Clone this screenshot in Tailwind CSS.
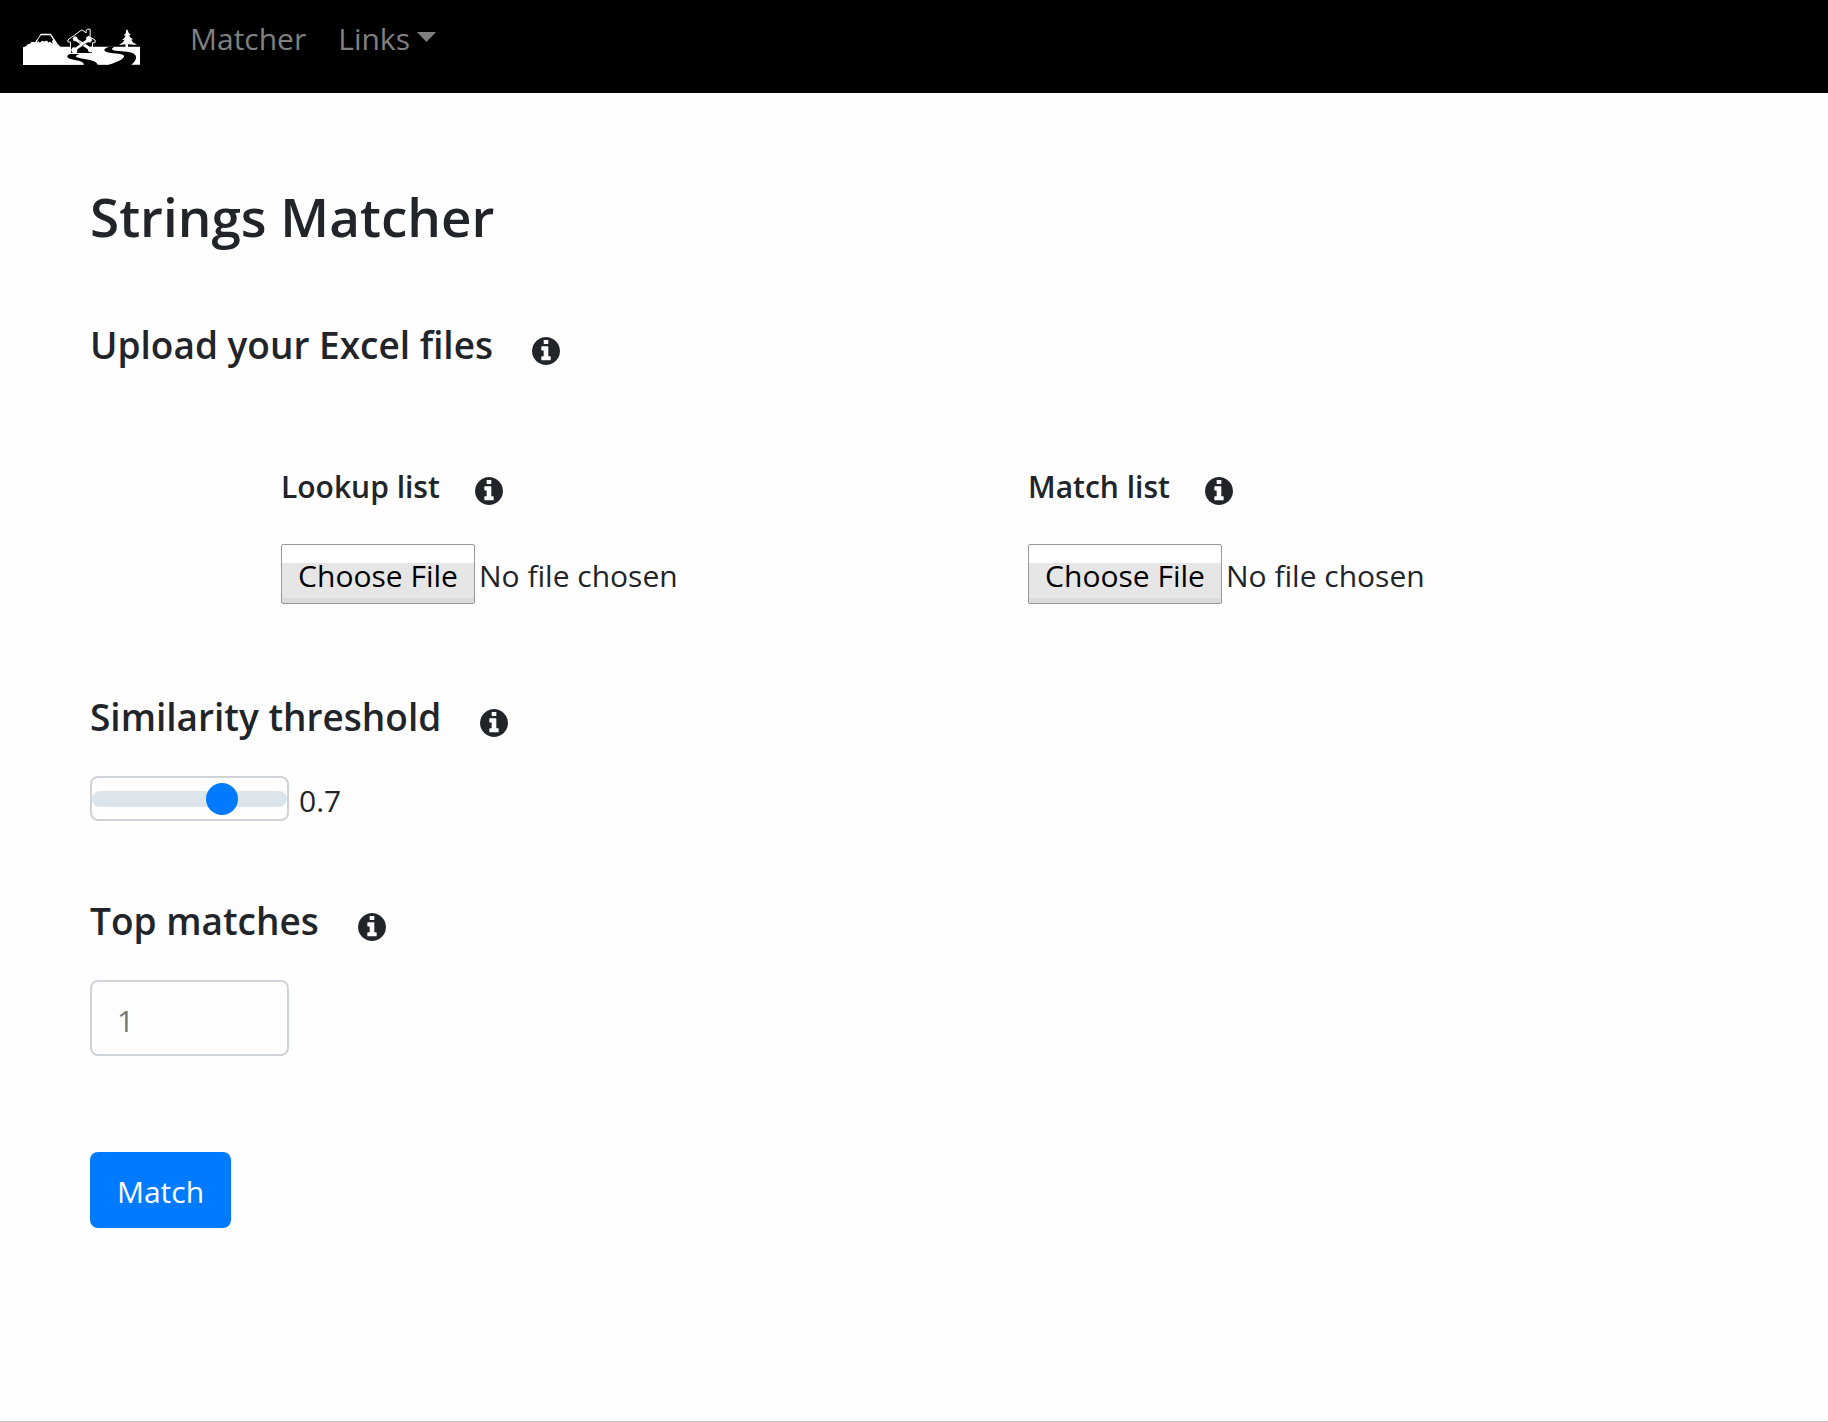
<!DOCTYPE html>
<html lang="en">
<head>
    <meta charset="UTF-8">
    <meta name="viewport" content="width=device-width, initial-scale=1.0">
    <title>Strings Matcher</title>
    <script src="https://cdn.jsdelivr.net/npm/@tailwindcss/browser@4"></script>
</head>
<body class="min-h-screen flex flex-col bg-[#fefefe] text-[#212529] text-[30px] leading-[48px] font-['Open_Sans','Noto_Sans',sans-serif] border-b border-[#c8c8c8]">
    <!-- Info icon, reused next to every heading -->
    <svg class="hidden" aria-hidden="true">
        <symbol id="info" viewBox="0 128 1536 1536">
            <path d="M1024 1376v-160q0-14-9-23t-23-9h-96v-512q0-14-9-23t-23-9h-320q-14 0-23 9t-9 23v160q0 14 9 23t23 9h96v320h-96q-14 0-23 9t-9 23v160q0 14 9 23t23 9h448q14 0 23-9t9-23zm-128-896v-160q0-14-9-23t-23-9h-192q-14 0-23 9t-9 23v160q0 14 9 23t23 9h192q14 0 23-9t9-23zm640 416q0 209-103 385.5t-279.5 279.5-385.5 103-385.5-103-279.5-279.5-103-385.5 103-385.5 279.5-279.5 385.5-103 385.5 103 279.5 279.5 103 385.5z"/>
        </symbol>
    </svg>

    <nav class="flex items-start h-[93px] bg-black px-[23px] pt-[15px] text-[#808080]">
        <a href="#" aria-label="Home" class="mt-[13px] mr-[50px]">
            <svg class="w-[117px] h-[38px]" viewBox="39 40 352 113">
                <!-- ground and mountain -->
                <path fill="#fff" d="M39 151V97l9-3 5-6 7-1 5-6 10 1 12-16 5-9h31l9 13 12 18 8 8h239v54z"/>
                <path fill="#000" d="M93 61h28l9 14-4 4 3 8-9-6-5 2-4-6-8 3-6-2-8 6-2-5-7 3 6-11z"/>
                <!-- roads -->
                <path fill="#000" d="M186 117C170 119 168 128 180 132C200 138 224 138 222 151H264C262 138 240 135 215 131C197 128 190 124 212 117Z"/>
                <path fill="#000" d="M300 96C282 100 278 108 292 112C315 117 345 116 343 124C340 136 315 143 291 152H362C376 143 384 128 376 120C368 110 340 110 318 108C304 106 304 102 314 96Z"/>
                <!-- house -->
                <path fill="#000" stroke="#fff" stroke-width="3" d="M182 116V82l-8-1v-6l42-30 13 9v-8l4-3h8v24l15 9v7l-8 1v32z"/>
                <path fill="#fff" d="M188 70l6-6 7 2 3 7 36 23 7-1 4 5-1 9-7 4-8-4-1-6-36-24-7-1z"/>
                <path fill="#fff" d="M244 67l-8-4-7 5v7l-32 23-8-1-5 7 2 8 8 5 8-4v-8l33-23 7 1 5-7z"/>
                <path fill="none" stroke="#000" stroke-width="1.5" d="M204 103l29-21M206 79l8 6"/>
                <!-- tree -->
                <path fill="#fff" d="M350 43l4 3 3 8 6 6-5 1 5 8 7 4-5 2 5 8 12 6-9 1-18-2v10h-8V88l-11 2h-8l11-7 5-7-7-1 8-6 3-7-6-1 6-6z"/>
            </svg>
        </a>
        <a href="#" class="mr-[32px]">Matcher</a>
        <a href="#" class="flex">Links
            <svg class="ml-[7px] mt-[17px] w-[19px] h-[10px]" viewBox="0 0 19 10" aria-hidden="true"><path fill="currentColor" d="M0 0h19l-9.500 10z"/></svg>
        </a>
    </nav>

    <main class="pl-[90px] pr-[53px] pt-[90px] pb-12">
        <h1 class="text-[53px] leading-[68px] font-semibold">Strings Matcher</h1>

        <form>
            <h2 class="mt-[70px] flex items-center gap-[39px] text-[37px] font-semibold">Upload your Excel files
                <button type="button" aria-label="About the files" class="mt-3"><svg class="size-7" fill="currentColor"><use href="#info"/></svg></button>
            </h2>

            <div class="mt-[98px] pl-[191px] grid grid-cols-2">
                <div>
                    <h3 class="flex items-center gap-[35px] text-[30px] leading-[40px] font-semibold">
                        <label for="lookup">Lookup list</label>
                        <button type="button" aria-label="About the lookup list" class="mt-2"><svg class="size-7" fill="currentColor"><use href="#info"/></svg></button>
                    </h3>
                    <input id="lookup" type="file" class="mt-[37px] block w-full h-[60px] file:h-[60px] file:w-[194px] file:mr-1 file:pt-1 file:border file:border-solid file:border-[#999] file:rounded-xs file:text-black file:bg-[linear-gradient(#fff_18px,#e6e6e6_18px_53px,#dadada_53px)]">
                </div>
                <div>
                    <h3 class="flex items-center gap-[35px] text-[30px] leading-[40px] font-semibold">
                        <label for="match">Match list</label>
                        <button type="button" aria-label="About the match list" class="mt-2"><svg class="size-7" fill="currentColor"><use href="#info"/></svg></button>
                    </h3>
                    <input id="match" type="file" class="mt-[37px] block w-full h-[60px] file:h-[60px] file:w-[194px] file:mr-1 file:pt-1 file:border file:border-solid file:border-[#999] file:rounded-xs file:text-black file:bg-[linear-gradient(#fff_18px,#e6e6e6_18px_53px,#dadada_53px)]">
                </div>
            </div>

            <h2 class="mt-[89px] flex items-center gap-[39px] text-[37px] font-semibold">
                <label for="threshold">Similarity threshold</label>
                <button type="button" aria-label="About the threshold" class="mt-3"><svg class="size-7" fill="currentColor"><use href="#info"/></svg></button>
            </h2>
            <div class="mt-[35px] h-[45px] flex items-center gap-[10px]">
                <input id="threshold" type="range" min="0" max="1" step="0.1" value="0.7" class="appearance-none w-[199px] h-[45px] border-2 border-[#ced4da] rounded-lg [&::-webkit-slider-runnable-track]:h-4 [&::-webkit-slider-runnable-track]:rounded-full [&::-webkit-slider-runnable-track]:bg-[#dbe5eb] [&::-webkit-slider-thumb]:appearance-none [&::-webkit-slider-thumb]:size-8 [&::-webkit-slider-thumb]:-mt-2 [&::-webkit-slider-thumb]:rounded-full [&::-webkit-slider-thumb]:bg-[#007bff]">
                <output id="thresholdValue" for="threshold" class="mt-1">0.7</output>
            </div>

            <h2 class="mt-[76px] flex items-center gap-[39px] text-[37px] font-semibold">
                <label for="top">Top matches</label>
                <button type="button" aria-label="About top matches" class="mt-3"><svg class="size-7" fill="currentColor"><use href="#info"/></svg></button>
            </h2>
            <input id="top" type="number" placeholder="1" class="mt-[35px] block w-[199px] h-[76px] px-[25px] pt-1 border-2 border-[#ced4da] rounded-lg placeholder:text-[#757575]">

            <button type="submit" class="mt-[96px] h-[76px] w-[141px] pt-1 rounded-lg bg-[#007bff] text-white">Match</button>
        </form>
    </main>

    <script>
        const threshold = document.getElementById('threshold');
        const thresholdValue = document.getElementById('thresholdValue');
        threshold.addEventListener('input', () => {
            thresholdValue.textContent = threshold.value;
        });
    </script>
</body>
</html>
